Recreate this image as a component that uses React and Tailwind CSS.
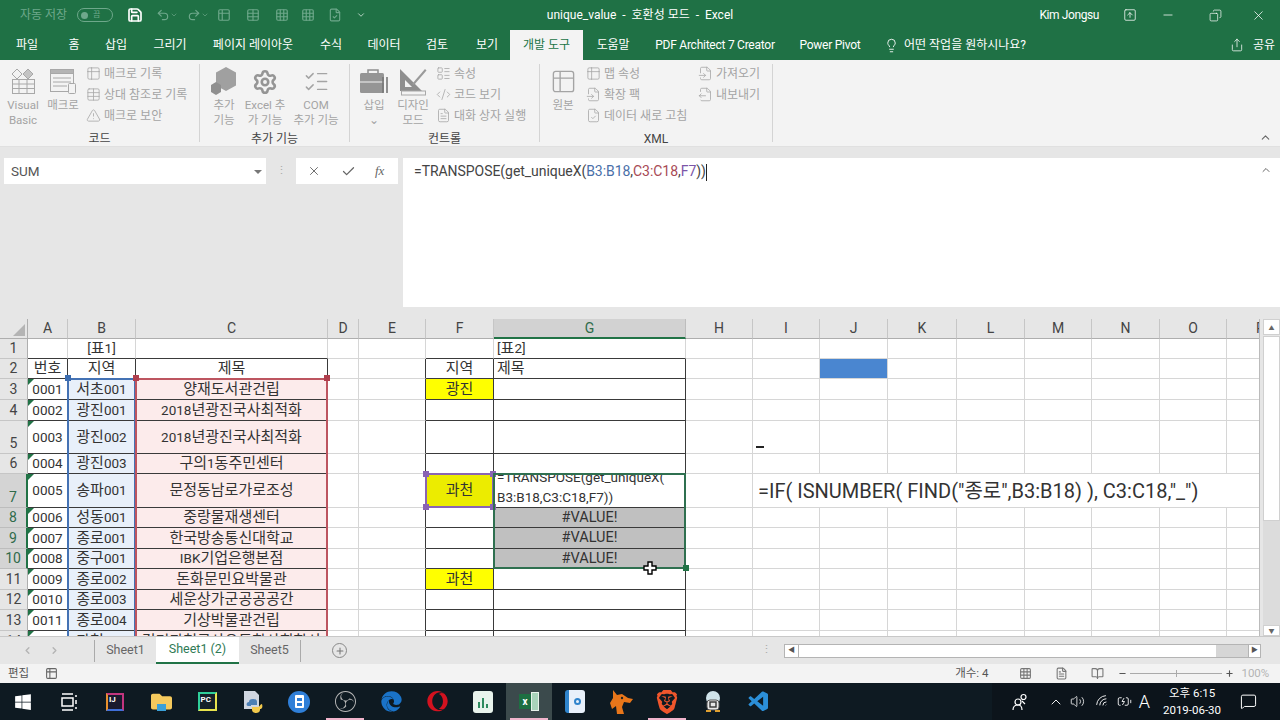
import { Save, Undo2, Redo2, Lightbulb, Share, X, Minus, Copy, ChevronUp, ChevronDown, Check, Plus, Volume2, Wifi, BatteryCharging, MessageSquare, SquareArrowUp, ChevronLeft, ChevronRight, Grid3x3, FileText, BookOpen, Table2, Table, AlertTriangle, Code2, FileInput, FileOutput, FileCheck, LayoutList, Settings, ListChecks } from 'lucide-react'
import { FaWindows, FaEdge, FaOpera, FaFolder } from 'react-icons/fa'
import { SiBrave, SiObsstudio } from 'react-icons/si'
import { VscVscode } from 'react-icons/vsc'

const TABS = [
  ['파일', 'w-[54px]'], ['홈', 'w-[40px]'], ['삽입', 'w-[44px]'], ['그리기', 'w-[64px]'], ['페이지 레이아웃', 'w-[102px]'],
  ['수식', 'w-[54px]'], ['데이터', 'w-[52px]'], ['검토', 'w-[54px]'], ['보기', 'w-[46px]'],
]
const TABS_AFTER = [['도움말', 'w-[60px]'], ['PDF Architect 7 Creator', 'w-[144px]'], ['Power Pivot', 'w-[86px]']]

const COLS = ['A', 'B', 'C', 'D', 'E', 'F', 'G', 'H', 'I', 'J', 'K', 'L', 'M', 'N', 'O', 'P']

const CELLS = {
  B1: '[표1]', G1: '[표2]', A2: '번호', B2: '지역', C2: '제목', F2: '지역', G2: '제목',
  F3: '광진', F7: '과천', F11: '과천',
  G8: '#VALUE!', G9: '#VALUE!', G10: '#VALUE!',
  A3: '0001', B3: '서초001', C3: '양재도서관건립',
  A4: '0002', B4: '광진001', C4: '2018년광진국사최적화',
  A5: '0003', B5: '광진002', C5: '2018년광진국사최적화',
  A6: '0004', B6: '광진003', C6: '구의1동주민센터',
  A7: '0005', B7: '송파001', C7: '문정동남로가로조성',
  A8: '0006', B8: '성동001', C8: '중랑물재생센터',
  A9: '0007', B9: '종로001', C9: '한국방송통신대학교',
  A10: '0008', B10: '중구001', C10: 'IBK기업은행본점',
  A11: '0009', B11: '종로002', C11: '돈화문민요박물관',
  A12: '0010', B12: '종로003', C12: '세운상가군공공공간',
  A13: '0011', B13: '종로004', C13: '기상박물관건립',
  A14: '0012', B14: '과천001', C14: '경기과천국사오동학사회학사',
}

// Latin runs in the sheet are narrower than the hangul next to them
function Txt({ text }) {
  if (text[0] === '#') return <span className="text-[14.5px]">{text}</span>
  return text.split(/([0-9A-Za-z\[\]]+)/).map((part, i) =>
    /^[0-9A-Za-z\[\]]/.test(part)
      ? <span key={i} className="text-[13.5px]">{part}</span>
      : <span key={i}>{part}</span>
  )
}

function cellClasses(col, row) {
  const t1 = col === 'A' || col === 'B' || col === 'C'
  const t2 = col === 'F' || col === 'G'
  const darkBottom = (t1 || t2) && row >= 1
  const darkRight = (t1 && row >= 2) || ((col === 'E' || t2) && row >= 2)
  const out = [darkBottom ? 'border-b-[#3a3a3a]' : 'border-b-[#d6d6d6]', darkRight ? 'border-r-[#3a3a3a]' : 'border-r-[#d6d6d6]']
  if (col === 'B' && row >= 3) out.push('bg-[#e8f0fa]')
  if (col === 'C' && row >= 3) out.push('bg-[#fcebeb]')
  if (col === 'F' && (row === 3 || row === 11)) out.push('bg-[#ffff00]')
  if (col === 'F' && row === 7) out.push('bg-[#ecec00]')
  if (col === 'G' && row >= 8 && row <= 10) out.push('bg-[#c0c0c0]')
  if (col === 'J' && row === 2) out.push('bg-[#4a86d0]')
  return out.join(' ')
}

function Sheet() {
  const rows = Array.from({ length: 14 }, (_, i) => i + 1)
  return (
    <div className="grid grid-cols-[28px_40px_68px_192px_31px_67px_68px_192px_67px_67px_68px_69px_68px_67px_68px_67px_68px] grid-rows-[20px_20px_20px_21px_21px_33px_20px_34px_20px_21px_20px_21px_20px_21px_21px] text-[15px] text-[#333] bg-white">
      <div className="bg-[#e6e6e6] border-b border-r border-[#aeaeae] flex items-end justify-end p-[2px]">
        <div className="w-0 h-0 border-b-[12px] border-l-[12px] border-b-[#b4b4b4] border-l-transparent" />
      </div>
      {COLS.map(c => (
        <div key={c} className={c === 'G'
          ? 'bg-[#d2d2d2] border-b-2 border-b-[#217346] border-r border-r-[#bdbdbd] flex items-center justify-center text-[#2f6b4a] text-[14px]'
          : 'bg-[#e6e6e6] border-b border-b-[#aeaeae] border-r border-r-[#c6c6c6] flex items-center justify-center text-[#444] text-[14px] overflow-hidden'}>
          {c}
        </div>
      ))}
      {rows.map(r => [
        <div key={`h${r}`} className={r >= 7 && r <= 10
          ? 'bg-[#d4d4d4] border-r-2 border-r-[#217346] border-b border-b-[#bdbdbd] flex items-end justify-center text-[#2f6b4a] text-[14px] leading-[19px]'
          : 'bg-[#e6e6e6] border-r border-r-[#aeaeae] border-b border-b-[#c6c6c6] flex items-end justify-center text-[#444] text-[14px] leading-[19px]'}>
          {r}
        </div>,
        ...COLS.map(c => {
          const id = `${c}${r}`
          if (r === 7 && c === 'I') {
            return (
              <div key={id} className="col-span-8 border-b border-b-[#d6d6d6] flex items-center pl-[5px] text-[20px] whitespace-nowrap text-[#333]">
                =IF( ISNUMBER( FIND("종로",B3:B18) ), C3:C18,"_")
              </div>
            )
          }
          if (r === 7 && COLS.indexOf(c) > 8) return null
          if (id === 'G7') {
            return (
              <div key={id} className="flex flex-col justify-end overflow-hidden pl-[3px] border-b border-r border-b-[#3a3a3a] border-r-[#3a3a3a] leading-[20px] text-[13.5px] whitespace-nowrap">
                <div className="shrink-0">=TRANSPOSE(get_uniqueX(</div>
                <div className="shrink-0">B3:B18,C3:C18,F7))</div>
              </div>
            )
          }
          const left = id === 'G1' || id === 'G2'
          return (
            <div key={id} className={`relative flex items-center overflow-hidden border-b border-r whitespace-nowrap ${left ? 'justify-start pl-[3px]' : 'justify-center'} ${cellClasses(c, r)}`}>
              {id === 'I5' && <div className="absolute left-[3px] bottom-[5px] w-[8px] h-[2px] bg-[#222]" />}
              {c === 'A' && r >= 3 && <div className="absolute left-0 top-0 w-0 h-0 border-t-[6px] border-r-[6px] border-t-[#217346] border-r-transparent" />}
              {CELLS[id] && <Txt text={CELLS[id]} />}
            </div>
          )
        }),
      ])}
    </div>
  )
}

function Handle({ className }) {
  return <div className={`absolute w-[6px] h-[6px] ${className}`} />
}

function RangeOverlays() {
  return (
    <>
      <div className="absolute left-[67px] top-[59px] w-[69px] h-[280px] border-2 border-[#4472b4] pointer-events-none" />
      <div className="absolute left-[135px] top-[59px] w-[193px] h-[280px] border-2 border-[#bd5560] pointer-events-none" />
      <Handle className="left-[65px] top-[56px] bg-[#3b6cb0]" />
      <Handle className="left-[133px] top-[56px] bg-[#b0404e]" />
      <Handle className="left-[324px] top-[56px] bg-[#b0404e]" />
      <div className="absolute left-[425px] top-[154px] w-[69px] h-[35px] border-2 border-[#8a64b4] pointer-events-none" />
      <Handle className="left-[423px] top-[152px] bg-[#8a64b4]" />
      <Handle className="left-[490px] top-[152px] bg-[#8a64b4]" />
      <Handle className="left-[423px] top-[185px] bg-[#8a64b4]" />
      <Handle className="left-[490px] top-[185px] bg-[#8a64b4]" />
      <div className="absolute left-[493px] top-[154px] w-[193px] h-[96px] border-2 border-[#2f7050] pointer-events-none" />
      <Handle className="left-[683px] top-[246px] bg-[#217346]" />
      <svg className="absolute left-[643px] top-[242px]" width="14" height="14" viewBox="0 0 14 14">
        <path d="M5 1h4v4h4v4H9v4H5V9H1V5h4z" fill="#fff" stroke="#000" strokeWidth="1.4" />
      </svg>
    </>
  )
}

const muted = '#a8a8a8'

function VbIcon() {
  return (
    <svg width="27" height="27" viewBox="0 0 27 27" fill="none" stroke="#a8a8a8">
      <path d="M7 1l5 5-5 5-5-5z" />
      <path d="M18 1l5 5-5 5-5-5z" fill="#c4c4c4" />
      <rect x="2.5" y="11.5" width="22" height="14" fill="#f3f3f3" />
      <path d="M2 16h23M2 20.5h23M9 12v13M17 12v13" />
    </svg>
  )
}

function MacroIcon() {
  return (
    <svg width="29" height="27" viewBox="0 0 29 27" fill="none" stroke="#a8a8a8">
      <rect x="1.5" y="1.5" width="23" height="22" />
      <path d="M1.5 1.5h23v4h-23z" fill="#b4b4b4" />
      <path d="M4 10h18M4 14h18M4 18h14" />
      <rect x="19.5" y="15.5" width="7" height="10" rx="1" fill="#f3f3f3" />
    </svg>
  )
}

function CubeIcon() {
  return (
    <svg width="27" height="29" viewBox="0 0 27 29">
      <path d="M15 0l10 5.5v13L15 24l-10-5.5v-13z" fill="#a0a0a0" />
      <path d="M5 15l5 3v7l-5 3-5-3v-7z" fill="#8f8f8f" />
    </svg>
  )
}

function DesignIcon() {
  return (
    <svg width="30" height="29" viewBox="0 0 30 29" fill="none">
      <path d="M2 2v22h22z" fill="#8e8e8e" />
      <path d="M7 13v7h7z" fill="#f3f3f3" />
      <path d="M14 17L27 2l1.5 1.5L16 18z" fill="#9a9a9a" />
      <rect x="3.5" y="24" width="24" height="4" fill="#f3f3f3" stroke="#a8a8a8" />
    </svg>
  )
}

function ToolboxIcon() {
  return (
    <svg width="30" height="27" viewBox="0 0 30 27" fill="none">
      <path d="M9 5V2h10v3" stroke="#8e8e8e" strokeWidth="1.5" />
      <rect x="1" y="5" width="24" height="20" rx="1.5" fill="#959595" />
      <path d="M1 14h24" stroke="#f3f3f3" />
      <path d="M24 9v16M28 9v16" stroke="#777" strokeWidth="1.6" />
    </svg>
  )
}

function BigBtn({ width, icon, lines }) {
  return (
    <div className={`${width} pt-[3px] flex flex-col items-center`}>
      <div className="h-[29px] flex items-center justify-center">{icon}</div>
      <div className="mt-[2px] text-center leading-[15px] text-[11.5px] whitespace-nowrap text-[#a4a4a4]">
        {lines.map(l => <div key={l}>{l}</div>)}
      </div>
    </div>
  )
}

function SmallRow({ Icon, label }) {
  return (
    <div className="h-[21px] flex items-center gap-[3px] whitespace-nowrap text-[12px] text-[#a4a4a4]">
      <Icon size={15} color={muted} strokeWidth={1.3} />
      <span>{label}</span>
    </div>
  )
}

function RibbonGroup({ width, pad, label, children }) {
  return (
    <div className={`${width} shrink-0 flex flex-col border-r border-[#d4d4d4]`}>
      <div className={`flex-1 flex ${pad}`}>{children}</div>
      <div className="h-[16px] -mb-[5px] text-center text-[12px] leading-[16px] text-[#444]">{label}</div>
    </div>
  )
}

function Ribbon() {
  return (
    <div className="relative h-[87px] shrink-0 bg-[#f3f3f3] flex pt-[4px] pb-[4px] border-b border-[#e0e0e0]">
      <RibbonGroup width="w-[200px]" pad="pl-[3px]" label="코드">
        <BigBtn width="w-[40px]" icon={<VbIcon />} lines={['Visual', 'Basic']} />
        <BigBtn width="w-[40px]" icon={<MacroIcon />} lines={['매크로']} />
        <div className="-mt-[1px] ml-[3px]">
          <SmallRow Icon={Table2} label="매크로 기록" />
          <SmallRow Icon={Table} label="상대 참조로 기록" />
          <SmallRow Icon={AlertTriangle} label="매크로 보안" />
        </div>
      </RibbonGroup>
      <RibbonGroup width="w-[150px]" pad="pl-[4px]" label="추가 기능">
        <BigBtn width="w-[40px]" icon={<CubeIcon />} lines={['추가', '기능']} />
        <BigBtn width="w-[42px]" icon={<Settings size={26} color="#959595" strokeWidth={2.4} />} lines={['Excel 추', '가 기능']} />
        <BigBtn width="w-[60px]" icon={<ListChecks size={27} color="#a4a4a4" strokeWidth={1.3} />} lines={['COM', '추가 기능']} />
      </RibbonGroup>
      <RibbonGroup width="w-[190px]" pad="pl-[4px]" label="컨트롤">
        <BigBtn width="w-[40px]" icon={<ToolboxIcon />} lines={['삽입', '⌄']} />
        <BigBtn width="w-[38px]" icon={<DesignIcon />} lines={['디자인', '모드']} />
        <div className="-mt-[1px] ml-[4px]">
          <SmallRow Icon={LayoutList} label="속성" />
          <SmallRow Icon={Code2} label="코드 보기" />
          <SmallRow Icon={FileText} label="대화 상자 실행" />
        </div>
      </RibbonGroup>
      <RibbonGroup width="w-[233px]" pad="pl-[6px]" label="XML">
        <BigBtn width="w-[34px]" icon={<Table2 size={27} color="#a4a4a4" strokeWidth={1.2} />} lines={['원본']} />
        <div className="-mt-[1px] ml-[6px] w-[111px]">
          <SmallRow Icon={Table2} label="맵 속성" />
          <SmallRow Icon={FileInput} label="확장 팩" />
          <SmallRow Icon={FileCheck} label="데이터 새로 고침" />
        </div>
        <div className="-mt-[1px] ml-[1px]">
          <SmallRow Icon={FileInput} label="가져오기" />
          <SmallRow Icon={FileOutput} label="내보내기" />
        </div>
      </RibbonGroup>
      <ChevronUp size={13} color="#666" className="absolute right-[8px] bottom-[2px]" />
    </div>
  )
}

function TitleBar() {
  const q = '#6ea88b'
  return (
    <div className="h-[30px] shrink-0 flex items-center text-[12px] text-white">
      <div className="w-[400px] flex items-center">
        <span className="ml-[20px] w-[52px] text-[#6ea88b]">자동 저장</span>
        <div className="ml-[5px] w-[36px] h-[14px] rounded-full border border-[#6ea88b] flex items-center pl-[3px]">
          <div className="w-[7px] h-[7px] rounded-full bg-[#6ea88b]" />
          <span className="ml-[5px] text-[8px] text-[#6ea88b]">끔</span>
        </div>
        <Save size={16} color="#fff" strokeWidth={2.5} className="ml-[14px]" />
        <Undo2 size={14} color={q} className="ml-[13px]" />
        <ChevronDown size={8} color={q} />
        <Redo2 size={14} color={q} className="ml-[9px]" />
        <ChevronDown size={8} color={q} />
        <Table2 size={14} color={q} className="ml-[8px]" />
        <Table size={14} color={q} className="ml-[15px]" />
        <Grid3x3 size={14} color={q} className="ml-[15px]" />
        <Grid3x3 size={14} color={q} className="ml-[12px]" />
        <FileCheck size={14} color={q} className="ml-[13px]" />
        <ChevronDown size={10} color="#cfe3d8" className="ml-[14px]" />
      </div>
      <div className="flex-1 text-center whitespace-pre">unique_value  -  호환성 모드  -  Excel</div>
      <div className="w-[400px] flex items-center justify-end">
        <span className="tracking-[-0.4px]">Kim Jongsu</span>
        <SquareArrowUp size={14} strokeWidth={1.3} className="ml-[24px]" />
        <Minus size={14} strokeWidth={1.3} className="ml-[24px]" />
        <Copy size={13} strokeWidth={1.3} className="ml-[34px] -scale-x-100" />
        <X size={15} strokeWidth={1.2} className="ml-[29px] mr-[14px]" />
      </div>
    </div>
  )
}

function TabRow() {
  return (
    <div className="h-[30px] shrink-0 flex text-[12px] text-white whitespace-nowrap">
      {TABS.map(([t, w]) => <div key={t} className={`${w} flex items-center justify-center`}>{t}</div>)}
      <div className="w-[73px] bg-[#f3f3f3] text-[#217346] flex items-center justify-center">개발 도구</div>
      {TABS_AFTER.map(([t, w]) => <div key={t} className={`${w} flex items-center justify-center tracking-[-0.25px]`}>{t}</div>)}
      <div className="flex items-center ml-[11px]">
        <Lightbulb size={15} strokeWidth={1.4} />
        <span className="ml-[5px]">어떤 작업을 원하시나요?</span>
      </div>
      <div className="ml-auto flex items-center mr-[5px]">
        <Share size={14} strokeWidth={1.3} />
        <span className="ml-[9px]">공유</span>
      </div>
    </div>
  )
}

function FormulaBar() {
  return (
    <div className="pt-[11px] flex items-start pl-[4px] bg-[#e6e6e6] h-[172px] shrink-0">
      <div className="w-[262px] h-[26px] bg-white flex items-center justify-between pl-[7px] pr-[4px] pt-[1px] text-[13.5px] text-[#555]">
        <span>SUM</span>
        <div className="w-0 h-0 border-t-[4px] border-x-[4px] border-t-[#777] border-x-transparent" />
      </div>
      <div className="w-[30px] h-[26px] flex items-center justify-center text-[#aaa] text-[11px]">⋮</div>
      <div className="w-[102px] h-[26px] bg-white flex items-center text-[#666]">
        <X size={14} className="ml-[11px]" strokeWidth={1.6} />
        <Check size={15} className="ml-[20px]" strokeWidth={2} />
        <span className="ml-[19px] font-['Liberation_Serif',serif] italic text-[13px]">fx</span>
      </div>
      <div className="ml-[5px] flex-1 h-[149px] bg-white relative pl-[11px] pt-[3px] text-[14px] tracking-[-0.05px] text-[#444] whitespace-nowrap">
        <span>=TRANSPOSE(get_uniqueX(</span>
        <span className="text-[#4a6fa8]">B3:B18</span>,
        <span className="text-[#a84a55]">C3:C18</span>,
        <span className="text-[#7b55a8]">F7</span>))
        <span className="inline-block w-[1px] h-[17px] bg-[#222] align-middle" />
        <ChevronUp size={12} color="#666" className="absolute right-[8px] top-[6px]" />
      </div>
    </div>
  )
}

function VScroll() {
  return (
    <div className="w-[20px] shrink-0 pl-[3px] bg-[#e6e6e6] flex flex-col">
      <div className="h-[16px] bg-white border border-[#d0d0d0] flex items-center justify-center text-[6px] text-[#666]">▲</div>
      <div className="h-[185px] mt-[1px] bg-white border border-[#d0d0d0]" />
      <div className="flex-1 bg-[#dcdcdc]" />
      <div className="h-[11px] bg-white border border-[#d0d0d0] flex items-center justify-center text-[6px] text-[#666]">▼</div>
    </div>
  )
}

function SheetTabs() {
  return (
    <div className="h-[28px] shrink-0 bg-[#e6e6e6] flex items-center text-[12.5px] text-[#666] border-t border-[#c8c8c8]">
      <ChevronLeft size={11} color="#b4b4b4" strokeWidth={3} className="ml-[22px]" />
      <ChevronRight size={11} color="#b4b4b4" strokeWidth={3} className="ml-[16px]" />
      <div className="ml-[34px] w-[1px] h-[22px] bg-[#aaa]" />
      <div className="w-[61px] text-center">Sheet1</div>
      <div className="w-[83px] h-full bg-white border-b-2 border-[#217346] text-[#2f7a55] flex items-center justify-center">Sheet1 (2)</div>
      <div className="w-[61px] text-center">Sheet5</div>
      <div className="w-[1px] h-[22px] bg-[#aaa]" />
      <div className="ml-[31px] w-[15px] h-[15px] rounded-full border border-[#888] flex items-center justify-center">
        <Plus size={10} color="#777" strokeWidth={2.5} />
      </div>
      <div className="ml-[414px] text-[#aaa] text-[11px]">⋮</div>
      <div className="ml-[12px] w-[477px] h-[14px] border border-[#b4b4b4] bg-[#d6d6d6] flex">
        <div className="w-[14px] bg-white border-r border-[#b4b4b4] flex items-center justify-center text-[7px] text-[#555]">◀</div>
        <div className="w-[417px] bg-white" />
        <div className="flex-1" />
        <div className="w-[12px] bg-white border-l border-[#b4b4b4] flex items-center justify-center text-[7px] text-[#555]">▶</div>
      </div>
    </div>
  )
}

function StatusBar() {
  return (
    <div className="h-[19px] shrink-0 bg-[#f3f3f3] flex items-center text-[11.5px] text-[#555] whitespace-nowrap">
      <span className="ml-[8px]">편집</span>
      <Table2 size={13} color="#666" className="ml-[16px]" />
      <span className="ml-[897px]">개수: 4</span>
      <Grid3x3 size={13} color="#777" className="ml-[31px]" />
      <FileText size={13} color="#777" className="ml-[23px]" />
      <BookOpen size={13} color="#777" className="ml-[23px]" />
      <Minus size={9} color="#555" strokeWidth={3} className="ml-[14px]" />
      <div className="relative ml-[3px] w-[92px] h-[1px] bg-[#aaa]">
        <div className="absolute left-[46px] -top-[3px] w-[1px] h-[7px] bg-[#aaa]" />
      </div>
      <Plus size={9} color="#555" strokeWidth={3} className="ml-[3px]" />
      <span className="ml-[7px] text-[#b4b4b4]">100%</span>
    </div>
  )
}

function Slot({ children, active, mark }) {
  return (
    <div className={`relative w-[46px] h-full flex items-center justify-center ${active ? 'bg-[#3b4a4c]' : ''}`}>
      {children}
      {mark && <div className="absolute left-[4px] right-[4px] bottom-0 h-[2px] bg-[#f0b4cc]" />}
    </div>
  )
}

function Taskbar() {
  return (
    <div className="h-[37px] shrink-0 bg-[#0e1a22] flex items-center">
      <Slot><FaWindows size={18} color="#fff" /></Slot>
      <Slot>
        <svg width="17" height="18" viewBox="0 0 17 18" fill="none" stroke="#fff" strokeWidth="1.5">
          <path d="M1 1h11M1 17h11" />
          <rect x="1" y="5" width="11" height="8" />
          <path d="M15 2v2M15 7v4M15 14v2" />
        </svg>
      </Slot>
      <Slot>
        <div className="w-[18px] h-[18px] bg-[#1a1a2e] border-2 border-[#c2357e] border-b-[#3f6fd8] border-l-[#e8912d] text-white text-[8px] font-bold leading-[10px] pl-[1px]">IJ</div>
      </Slot>
      <Slot>
        <div className="relative">
          <FaFolder size={21} color="#f4c95d" />
          <div className="absolute left-[6px] bottom-[1px] w-[9px] h-[7px] bg-[#3aa0d8]" />
        </div>
      </Slot>
      <Slot>
        <div className="w-[19px] h-[19px] bg-[#14202a] border-2 border-[#2fce9a] border-b-[#e8e34d] border-r-[#e8e34d] text-white text-[8px] font-bold leading-[11px] pl-[1px]">PC</div>
      </Slot>
      <Slot>
        <svg width="22" height="24" viewBox="0 0 22 24">
          <path d="M2 1h11l4 4v14H2z" fill="#cfd6e0" />
          <path d="M7 12c0-2 1-3 4-3s4 1 4 3v3H9v1H6c-2 0-2-4 1-4z" fill="#4b7fb5" />
          <path d="M20 14c1 3 0 5-2 5v1c0 2-2 3-4 3s-4-1-4-3v-3h6c2 0 2-3 4-3z" fill="#f2c94c" />
        </svg>
      </Slot>
      <Slot>
        <div className="w-[22px] h-[22px] rounded-full bg-[#2f7fd8] flex items-center justify-center">
          <div className="w-[9px] h-[13px] bg-white rounded-[1px] flex flex-col justify-center gap-[2px] px-[2px]">
            <div className="h-[3px] bg-[#2f7fd8]" />
            <div className="h-[3px] bg-[#2f7fd8]" />
          </div>
        </div>
      </Slot>
      <Slot mark><SiObsstudio size={21} color="#b8b8b8" /></Slot>
      <Slot><FaEdge size={21} color="#1a73c8" /></Slot>
      <Slot><FaOpera size={21} color="#d3121f" /></Slot>
      <Slot>
        <div className="w-[20px] h-[22px] bg-[#e8f3ec] rounded-[3px] flex items-end justify-center gap-[2px] pb-[5px]">
          <div className="w-[2px] h-[6px] bg-[#2e8b5f]" />
          <div className="w-[2px] h-[10px] bg-[#2e8b5f]" />
          <div className="w-[2px] h-[4px] bg-[#2e8b5f]" />
        </div>
      </Slot>
      <Slot active mark>
        <div className="flex items-center">
          <div className="w-[12px] h-[15px] bg-[#1d6f42] text-white text-[10px] font-bold leading-[15px] text-center">x</div>
          <div className="w-[8px] h-[19px] bg-[#a9d3bb] border border-[#e8f3ec]" />
        </div>
      </Slot>
      <Slot>
        <div className="w-[20px] h-[23px] bg-[#e8f0fa] rounded-[3px] border-l-4 border-[#2f84cc] flex items-center justify-center">
          <div className="w-[7px] h-[7px] border-2 border-[#2f84cc] rounded-full" />
        </div>
      </Slot>
      <Slot>
        <svg width="26" height="28" viewBox="0 0 26 28">
          <path d="M5 2l4 5 5-1 6 4 5 1-3 4-6-1-2 5 2 7H9l-1-8-4 3-2-6 3-5z" fill="#e8761a" />
          <circle cx="14" cy="10" r="1.2" fill="#222" />
        </svg>
      </Slot>
      <Slot mark><SiBrave size={24} color="#f0562c" /></Slot>
      <Slot>
        <svg width="22" height="24" viewBox="0 0 22 24">
          <circle cx="11" cy="8" r="7" fill="#cfe3ea" />
          <rect x="5" y="10" width="12" height="10" rx="3" fill="#e6e6e6" stroke="#555" />
          <rect x="8" y="12" width="6" height="5" fill="none" stroke="#333" strokeWidth="1.4" />
          <path d="M4 21h5M13 21h5" stroke="#e0a030" strokeWidth="2" />
        </svg>
      </Slot>
      <Slot><VscVscode size={24} color="#2b8fd8" /></Slot>
      <div className="ml-auto flex items-center text-white h-full bg-[#0c141b] pl-[20px]">
        <svg width="16" height="18" viewBox="0 0 16 18" fill="none" stroke="#fff" strokeWidth="1.2">
          <circle cx="6" cy="9" r="3" />
          <circle cx="11.5" cy="4" r="2.5" />
          <path d="M1 17c0-3 2-5 5-5s4 2 4 5M10 8l3 3" />
        </svg>
        <ChevronUp size={16} strokeWidth={1.4} className="ml-[20px]" />
        <Volume2 size={15} strokeWidth={1.3} className="ml-[6px]" />
        <Wifi size={15} strokeWidth={1.4} className="ml-[10px] -rotate-45" />
        <BatteryCharging size={15} strokeWidth={1.4} className="ml-[7px]" />
        <span className="ml-[7px] text-[18px] font-light">A</span>
        <div className="ml-[6px] w-[72px] text-center text-[11.5px] leading-[17px]">
          <div>오후 6:15</div>
          <div>2019-06-30</div>
        </div>
        <MessageSquare size={17} strokeWidth={1.4} className="ml-[12px] mr-[23px]" />
      </div>
    </div>
  )
}

export default function App() {
  return (
    <div className="w-[1280px] h-[720px] overflow-hidden flex flex-col bg-[#e6e6e6] font-['Roboto','Noto_Sans_CJK_KR',sans-serif]">
      <div className="bg-[#1f7145] shrink-0">
        <TitleBar />
        <TabRow />
      </div>
      <Ribbon />
      <FormulaBar />
      <div className="h-[317px] shrink-0 flex overflow-hidden">
        <div className="relative w-[1260px] shrink-0 overflow-hidden border-r border-[#bbb]">
          <Sheet />
          <RangeOverlays />
        </div>
        <VScroll />
      </div>
      <SheetTabs />
      <StatusBar />
      <Taskbar />
    </div>
  )
}
